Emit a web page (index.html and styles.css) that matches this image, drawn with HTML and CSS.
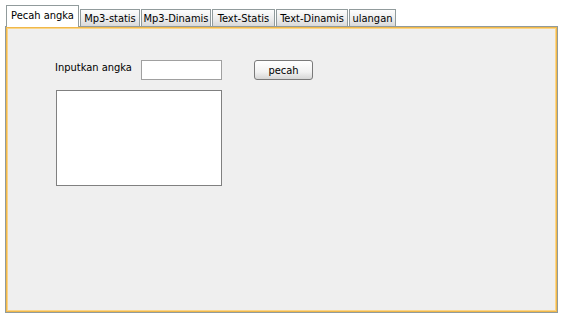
FILE: index.html
```html
<!DOCTYPE html>
<html lang="en">
<head>
    <meta charset="UTF-8">
    <title>Pecah angka</title>
    <link rel="stylesheet" href="styles.css">
</head>
<body>
    <div class="tabs">
        <div class="tab active">Pecah angka</div>
        <div class="tab">Mp3-statis</div>
        <div class="tab">Mp3-Dinamis</div>
        <div class="tab">Text-Statis</div>
        <div class="tab">Text-Dinamis</div>
        <div class="tab">ulangan</div>
    </div>
    <div class="panel">
        <div class="form-row">
            <label class="label">Inputkan angka</label>
            <input type="text" class="field">
            <button class="btn">pecah</button>
        </div>
        <textarea class="output"></textarea>
    </div>
</body>
</html>
```

FILE: styles.css
```css
body {
    margin: 0;
    background-color: #ffffff;
    font-family: "DejaVu Sans Condensed", "DejaVu Sans", sans-serif;
    font-size: 11px;
    color: #000000;
}
.tabs {
    display: flex;
    align-items: flex-end;
    padding: 5px 0 0 6px;
    height: 21px;
}
.tab {
    height: 17px;
    line-height: 17px;
    text-align: center;
    white-space: nowrap;
    border: 1px solid #919b9c;
    border-bottom: none;
    background: linear-gradient(#fdfdfd, #ebebeb 60%, #d9d9d9);
    margin-right: 1px;
    box-sizing: border-box;
}
.tab:nth-child(1) { width: 73px; }
.tab:nth-child(2) { width: 60px; }
.tab:nth-child(3) { width: 70px; }
.tab:nth-child(4) { width: 63px; }
.tab:nth-child(5) { width: 72px; }
.tab:nth-child(6) { width: 47px; }
.tab.active {
    height: 22px;
    line-height: 20px;
    background: #ffffff;
    position: relative;
    top: 1px;
    z-index: 1;
}
.panel {
    margin: 0 8px 0 5px;
    height: 287px;
    border: 1px solid #919b9c;
    box-shadow: inset 0 0 0 1px #f0b84a, inset 0 0 0 2px #fad58a;
    background-color: #efefef;
    padding: 33px 0 0 49px;
    box-sizing: border-box;
}
.form-row {
    display: flex;
    align-items: center;
    height: 20px;
}
.label {
    width: 86px;
    margin-bottom: 5px;
}
.field {
    width: 81px;
    height: 20px;
    box-sizing: border-box;
    border: 1px solid #a0a0a0;
    margin: 0;
    padding: 0 2px;
    background: #ffffff;
}
.btn {
    margin-left: 32px;
    width: 59px;
    height: 20px;
    box-sizing: border-box;
    border: 1px solid #7a7a7a;
    border-radius: 3px;
    background: linear-gradient(#ffffff, #f2f2f2 60%, #d6d6d6);
    font-family: "DejaVu Sans Condensed", "DejaVu Sans", sans-serif;
    font-size: 11px;
    padding: 0;
}
.output {
    display: block;
    margin: 10px 0 0 1px;
    width: 166px;
    height: 96px;
    box-sizing: border-box;
    border: 1px solid #808080;
    background: #ffffff;
    resize: none;
    padding: 0;
}
```
